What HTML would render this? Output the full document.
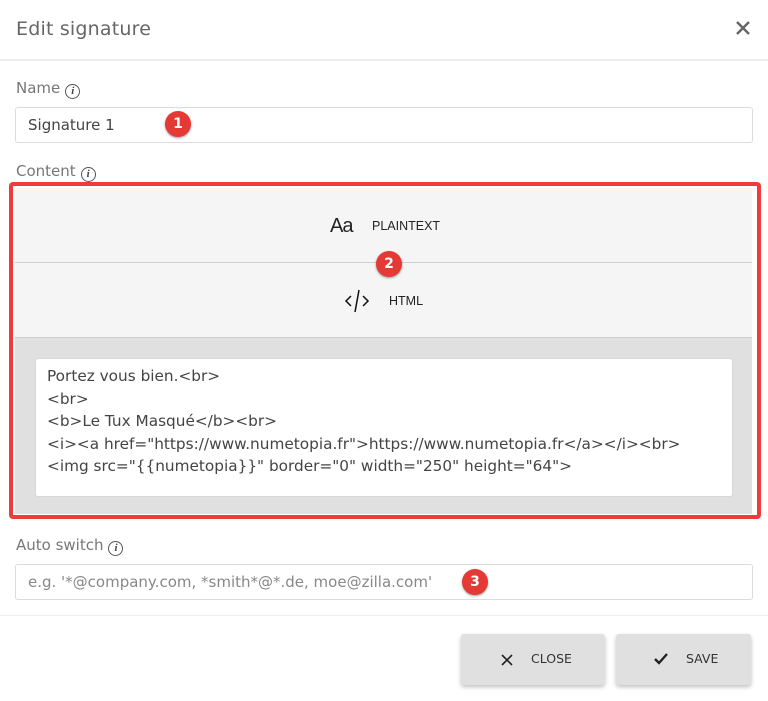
<!DOCTYPE html>
<html><head><meta charset="utf-8"><style>
*{box-sizing:border-box;margin:0;padding:0}
body{width:768px;height:701px;background:#fff;font-family:"DejaVu Sans","Liberation Sans",sans-serif;color:#333;position:relative;overflow:hidden}
.a{position:absolute}
.title{left:16px;top:18px;font-size:19px;color:#666;letter-spacing:0.2px}
.hr{left:0;width:768px;height:2px;background:#eee}
.lbl{left:16px;font-size:15px;color:#777}
.info{display:inline-block;width:15px;height:15px;border:1.4px solid #555;border-radius:50%;font-size:11px;text-align:center;line-height:13px;font-style:italic;color:#444;vertical-align:-1px;margin-left:5px;font-family:"Liberation Serif",serif;font-weight:bold}
.inp{left:15px;width:738px;height:36px;border:1px solid #dcdcdc;border-radius:3px;font-size:15px;padding:8px 12px;color:#444}
.badge{width:26px;height:26px;border-radius:50%;background:#e53935;color:#fff;font-weight:bold;font-size:14px;text-align:center;line-height:26px;box-shadow:0 1px 2px rgba(0,0,0,.4)}
.red{left:9px;top:182px;width:752px;height:337px;border:4px solid #ef3b3b;border-radius:4px}
.tab{left:15px;width:737px;height:75px;background:#f5f5f5;border-bottom:1px solid #d0d0d0;font-family:"Liberation Sans",sans-serif;font-size:12.5px;color:#222}
.btn{top:634px;height:51px;background:#e0e0e0;border-radius:3px;box-shadow:0 2px 4px rgba(0,0,0,.25);font-size:12.5px;color:#333;font-family:"DejaVu Sans",sans-serif}
</style></head><body>
<div class="a title">Edit signature</div>
<svg class="a" style="left:736px;top:21px" width="14" height="14" viewBox="0 0 14 14" stroke="#666" stroke-width="2.4"><path d="M1 1l12 12M13 1L1 13"/></svg>
<div class="a hr" style="top:59px"></div>
<div class="a lbl" style="top:79px">Name<span class="info">i</span></div>
<div class="a inp" style="top:107px">Signature 1</div>
<div class="a badge" style="left:165px;top:111px">1</div>
<div class="a lbl" style="top:162px">Content<span class="info">i</span></div>
<div class="a tab" style="top:188px"><span class="a" style="left:315px;top:27px;font-size:20px;letter-spacing:-1px;font-family:'Liberation Sans Narrow','Liberation Sans',sans-serif">Aa</span><span class="a" style="left:357px;top:31px">PLAINTEXT</span></div>
<div class="a tab" style="top:263px"><svg class="a" style="left:329px;top:26px" width="26" height="24" viewBox="0 0 26 24" fill="none" stroke="#111" stroke-width="1.5"><path d="M7 7l-5 5 5 5M19 7l5 5-5 5M15 1l-4 22"/></svg><span class="a" style="left:374px;top:31px">HTML</span></div>
<div class="a" style="left:15px;top:338px;width:737px;height:176px;background:#e0e0e0"></div>
<div class="a" style="left:35px;top:358px;width:698px;height:139px;background:#fff;border:1px solid #d8d8d8;border-radius:3px;padding:6px 11px;font-size:15.3px;line-height:22.5px;color:#444;white-space:pre">Portez vous bien.&lt;br&gt;
&lt;br&gt;
&lt;b&gt;Le Tux Masqué&lt;/b&gt;&lt;br&gt;
&lt;i&gt;&lt;a href="https://www.numetopia.fr"&gt;https://www.numetopia.fr&lt;/a&gt;&lt;/i&gt;&lt;br&gt;
&lt;img src="{{numetopia}}" border="0" width="250" height="64"&gt;</div>
<div class="a red"></div>
<div class="a badge" style="left:376px;top:251px">2</div>
<div class="a lbl" style="top:536px">Auto switch<span class="info">i</span></div>
<div class="a inp" style="top:564px;color:#888">e.g. '*@company.com, *smith*@*.de, moe@zilla.com'</div>
<div class="a badge" style="left:462px;top:569px">3</div>
<div class="a hr" style="top:615px;height:1px"></div>
<div class="a btn" style="left:461px;width:144px"><svg class="a" style="left:40px;top:20px" width="12" height="12" viewBox="0 0 12 12" stroke="#222" stroke-width="1.6"><path d="M1 1l10 10M11 1L1 11"/></svg><span class="a" style="left:70px;top:17px">CLOSE</span></div>
<div class="a btn" style="left:616px;width:135px"><svg class="a" style="left:38px;top:19px" width="14" height="12" viewBox="0 0 14 12" fill="none" stroke="#222" stroke-width="2.4"><path d="M1 6l4 4 8-9"/></svg><span class="a" style="left:70px;top:17px">SAVE</span></div>
</body></html>
